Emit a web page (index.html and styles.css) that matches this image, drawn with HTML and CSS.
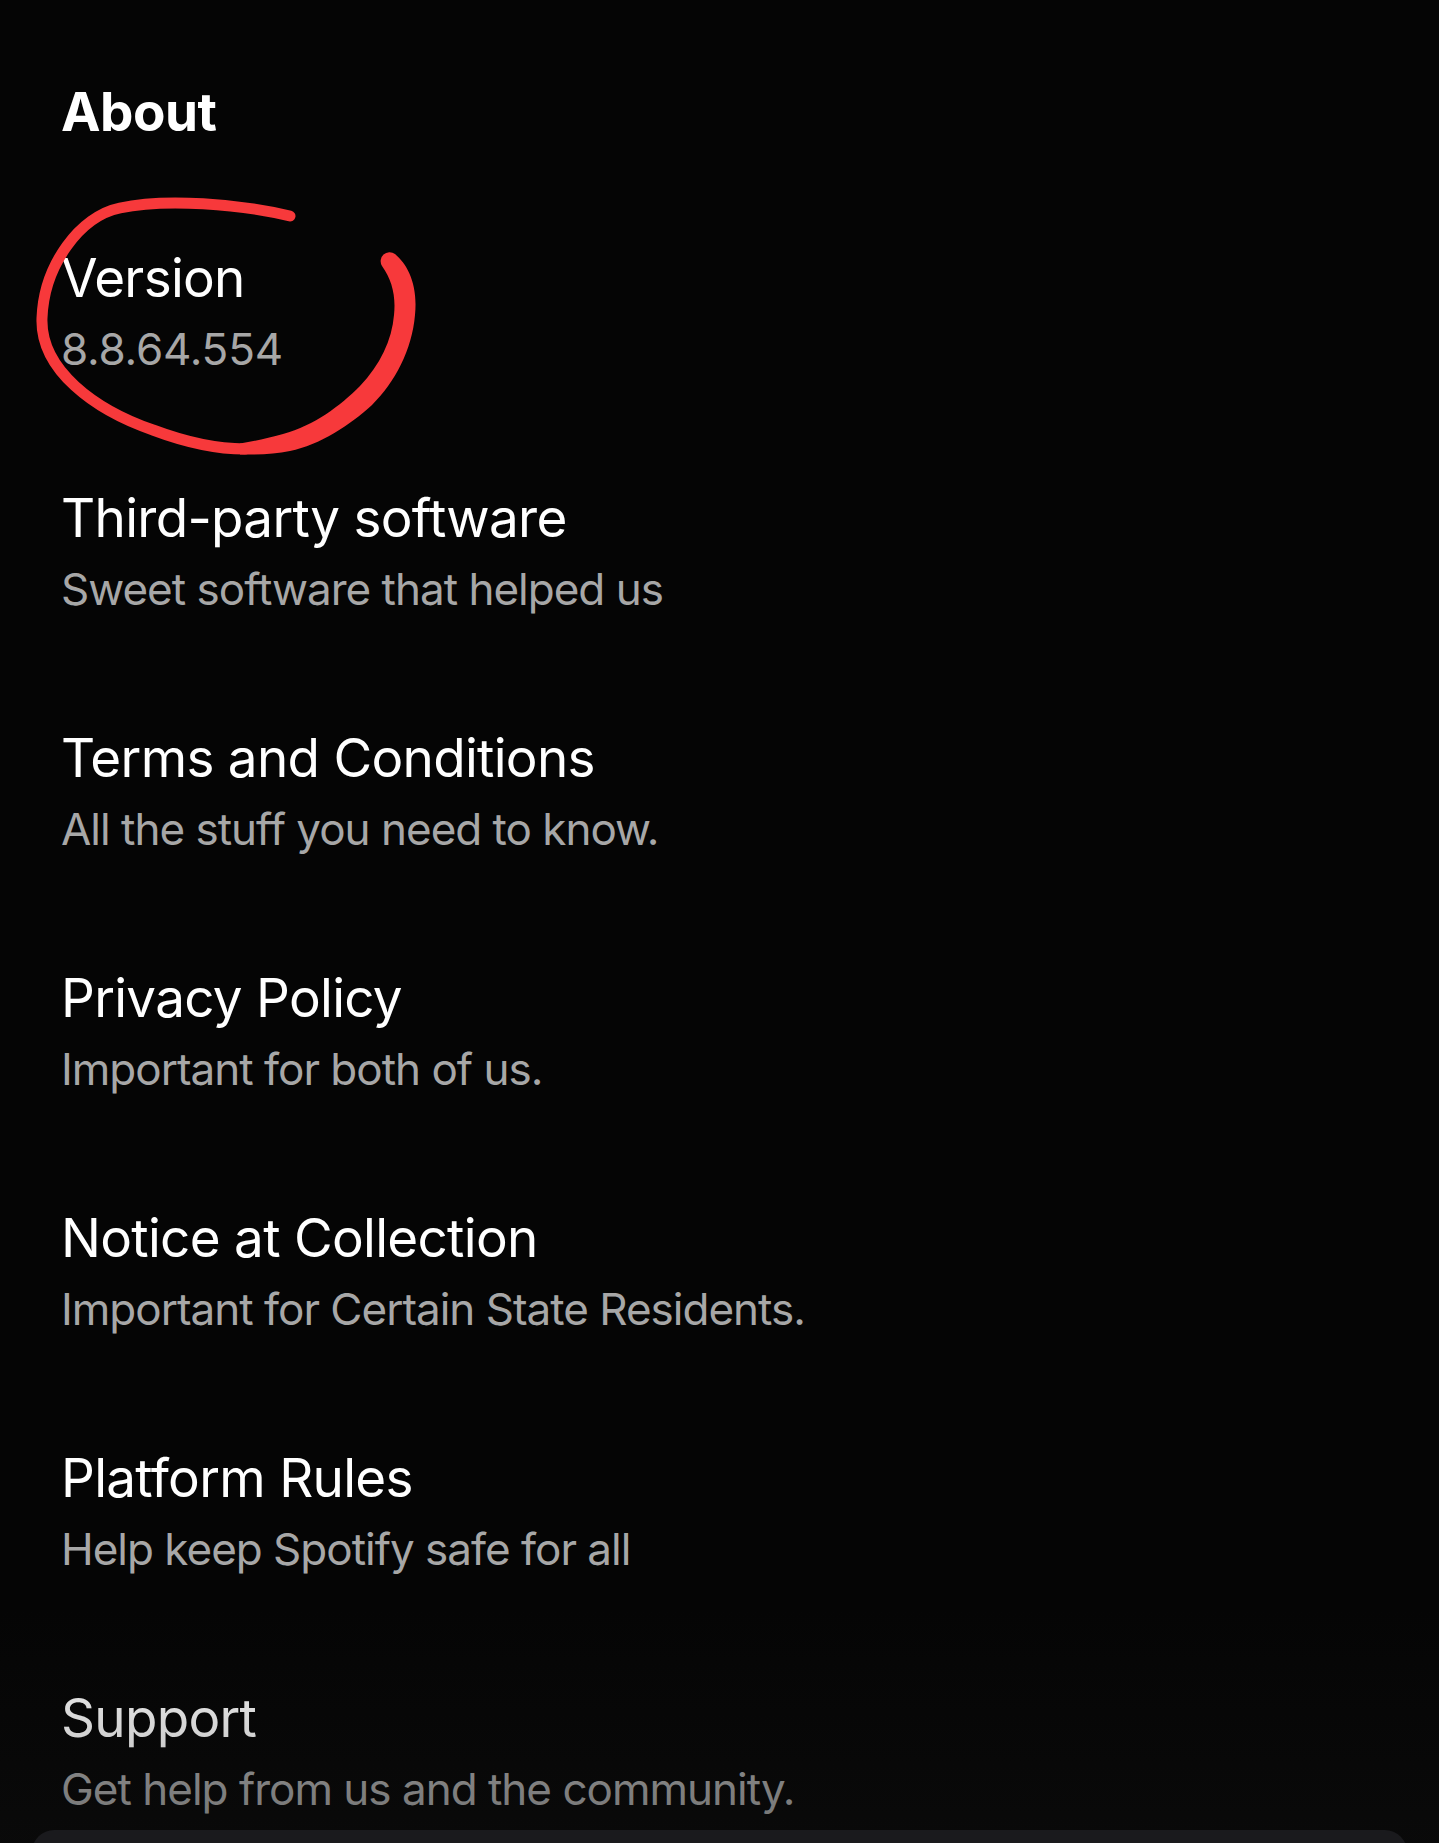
FILE: index.html
```html
<!DOCTYPE html>
<html lang="en">
<head>
<meta charset="utf-8">
<title>About</title>
<link rel="stylesheet" href="styles.css">
</head>
<body>
<main class="page">
  <h1 class="heading">About</h1>
  <ul class="list">
    <li class="item">
      <span class="title">Version</span>
      <span class="sub sub--number">8.8.64.554</span>
    </li>
    <li class="item">
      <span class="title">Third-party software</span>
      <span class="sub">Sweet software that helped us</span>
    </li>
    <li class="item">
      <span class="title">Terms and Conditions</span>
      <span class="sub">All the stuff you need to know.</span>
    </li>
    <li class="item">
      <span class="title">Privacy Policy</span>
      <span class="sub">Important for both of us.</span>
    </li>
    <li class="item">
      <span class="title">Notice at Collection</span>
      <span class="sub">Important for Certain State Residents.</span>
    </li>
    <li class="item">
      <span class="title">Platform Rules</span>
      <span class="sub">Help keep Spotify safe for all</span>
    </li>
    <li class="item">
      <span class="title">Support</span>
      <span class="sub">Get help from us and the community.</span>
    </li>
  </ul>

  <svg class="scribble" width="460" height="480" viewBox="0 0 460 480" aria-hidden="true">
    <path d="M290 216 C240 204 165 198 120 208 C80 216 44 265 42 318 C40 370 95 410 153 430 C185 442 215 449 245 449"
          fill="none" stroke="#f7393b" stroke-width="11" stroke-linecap="round"/>
    <path d="M240 454.5 C260 455 275 454 290 451 C320 445 350 425 372 405 C395 382 412 350 415 315 C418 285 408 265 395 254 A9 9 0 0 0 382 266 C392 280 396 296 394 315 C392 340 380 365 360 386 C340 406 315 425 283 434 C268 438 255 441 240 443.5 Z"
          fill="#f7393b"/>
  </svg>

  <div class="fade"></div>
  <div class="player"></div>
</main>
</body>
</html>
```

FILE: styles.css
```css
* {
  box-sizing: border-box;
}

html, body {
  margin: 0;
  padding: 0;
  background: #050505;
}

body {
  font-family: Inter, "Noto Sans", "Liberation Sans", sans-serif;
  color: #ffffff;
  overflow: hidden;
}

.page {
  position: relative;
  width: 1439px;
  height: 1843px;
  padding: 80px 0 0 61px;
  overflow: hidden;
}

.heading {
  margin: 0 0 102px 0;
  font-size: 53px;
  line-height: 64px;
  font-weight: 700;
  letter-spacing: -0.5px;
}

.list {
  list-style: none;
  margin: 0;
  padding: 0;
  display: flex;
  flex-direction: column;
  gap: 111px;
}

.item {
  display: flex;
  flex-direction: column;
  gap: 13px;
}

.title {
  font-size: 53px;
  line-height: 64px;
  font-weight: 400;
  color: #ffffff;
  letter-spacing: -0.7px;
}

.sub {
  font-size: 44px;
  line-height: 52px;
  font-weight: 400;
  color: #a7a7a7;
  letter-spacing: -1px;
}

.sub--number {
  letter-spacing: -0.2px;
}

.scribble {
  position: absolute;
  left: 0;
  top: 0;
  pointer-events: none;
}

.fade {
  position: absolute;
  left: 0;
  right: 0;
  top: 1610px;
  bottom: 0;
  background: linear-gradient(to bottom, rgba(18, 18, 18, 0) 0%, rgba(18, 18, 18, 0.35) 100%);
  pointer-events: none;
}

.player {
  position: absolute;
  left: 32px;
  width: 1375px;
  top: 1830px;
  height: 80px;
  background: #1a1a1d;
  border-radius: 22px;
}
```
